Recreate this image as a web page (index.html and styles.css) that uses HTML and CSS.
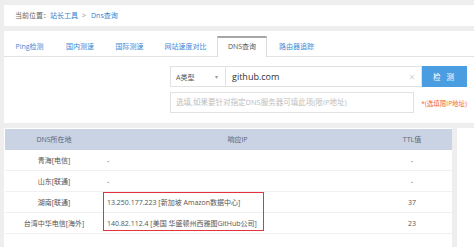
FILE: index.html
```html
<!DOCTYPE html>
<html lang="zh-CN">
<head>
    <meta charset="UTF-8">
    <meta name="viewport" content="width=device-width, initial-scale=1.0">
    <title>Dns查询 - 站长工具</title>
    <link rel="stylesheet" href="styles.css">
</head>
<body>
    <div class="crumb">
        当前位置：<a href="#">站长工具</a><span class="sep">&gt;</span><a href="#">Dns查询</a>
    </div>

    <div class="panel tool">
        <ul class="tabs">
            <li class="t-ping">Ping检测</li>
            <li class="t-cn">国内测速</li>
            <li class="t-intl">国际测速</li>
            <li class="t-cmp">网站速度对比</li>
            <li class="t-dns active">DNS查询</li>
            <li class="t-route">路由器追踪</li>
        </ul>

        <form class="query">
            <div class="query-row">
                <div class="select">A类型<span class="caret">&#9662;</span></div>
                <div class="host">
                    <span>github.com</span>
                    <span class="clear">&times;</span>
                </div>
                <button type="button" class="check">检 测</button>
            </div>
            <div class="query-row">
                <div class="server">选填,如果要针对指定DNS服务器可填此项(限IP地址)</div>
                <span class="note">*(选填限IP地址)</span>
            </div>
        </form>
    </div>

    <div class="bottom">
        <div class="panel result">
            <div class="trow thead">
                <div class="c-loc">DNS所在地</div>
                <div class="c-ip center">响应IP</div>
                <div class="c-ttl">TTL值</div>
            </div>
            <div class="trow">
                <div class="c-loc">青海[电信]</div>
                <div class="c-ip">-</div>
                <div class="c-ttl">-</div>
            </div>
            <div class="trow">
                <div class="c-loc">山东[联通]</div>
                <div class="c-ip">-</div>
                <div class="c-ttl">-</div>
            </div>
            <div class="trow">
                <div class="c-loc">湖南[联通]</div>
                <div class="c-ip">13.250.177.223 [新加坡 Amazon数据中心]</div>
                <div class="c-ttl">37</div>
            </div>
            <div class="trow">
                <div class="c-loc">台湾中华电信[海外]</div>
                <div class="c-ip">140.82.112.4 [美国 华盛顿州西雅图GitHub公司]</div>
                <div class="c-ttl">23</div>
            </div>

            <!-- 标注框 -->
            <div class="highlight"></div>
        </div>
        <div class="panel side"></div>
    </div>
</body>
</html>
```

FILE: styles.css
```css
* {
    margin: 0;
    padding: 0;
    box-sizing: border-box;
}

body {
    font-family: "Open Sans", "Noto Sans CJK SC", sans-serif;
    font-size: 7px;
    color: #555;
    background: #eeeeee;
    width: 474px;
    height: 247px;
    overflow: hidden;
}

a {
    color: #2f7fcf;
    text-decoration: none;
}

.panel {
    background: #fff;
}

/* 面包屑 */
.crumb {
    margin: 5px 0 0 4px;
    height: 21px;
    line-height: 21px;
    padding-left: 11px;
    background: #fff;
    color: #666;
}

.crumb .sep {
    margin: 0 5px 0 4px;
    color: #888;
}

/* 工具面板 */
.tool {
    margin: 5px 0 0 4px;
}

.tabs {
    display: flex;
    list-style: none;
    padding-top: 5px;
    border-bottom: 1px solid #e3e3e3;
}

.tabs li {
    height: 20px;
    line-height: 19px;
    text-align: center;
    white-space: nowrap;
    color: #3b8ad6;
    border: 1px solid transparent;
    border-bottom: none;
}

.t-ping { width: 51px; }
.t-cn { width: 50px; }
.t-intl { width: 49px; }
.t-cmp { width: 63px; }
.t-dns { width: 50px; }
.t-route { padding: 0 11px; }

.tabs li.active {
    color: #555;
    background: #fff;
    border-color: #dcdcdc;
    border-top: 2px solid #a6a6a6;
    line-height: 17px;
    margin-bottom: -1px;
    height: 21px;
}

.query {
    padding: 9px 7px 10px 166px;
    display: flex;
    flex-direction: column;
    gap: 5px;
}

.query-row {
    display: flex;
    align-items: center;
    height: 21px;
}

.select {
    width: 56px;
    height: 21px;
    border: 1px solid #e2e2e2;
    padding: 0 5px;
    display: flex;
    align-items: center;
    justify-content: space-between;
    color: #555;
}

.caret {
    color: #999;
    font-size: 6px;
    margin-right: 2px;
}

.host {
    flex: 1;
    height: 21px;
    border: 1px solid #e2e2e2;
    border-left: none;
    padding: 0 6px;
    display: flex;
    align-items: center;
    justify-content: space-between;
    font-size: 9px;
    color: #333;
}

.clear {
    color: #bbb;
    font-size: 10px;
    font-weight: 300;
}

.check {
    width: 45px;
    height: 21px;
    border: none;
    background: #4b9de2;
    color: #fff;
    font-family: inherit;
    font-size: 7.5px;
    letter-spacing: 2px;
}

.server {
    width: 247px;
    height: 21px;
    line-height: 19px;
    border: 1px solid #e2e2e2;
    padding-left: 5px;
    font-size: 7.5px;
    white-space: nowrap;
    color: #bdbdbd;
}

.note {
    margin-left: 7px;
    font-size: 6.5px;
    white-space: nowrap;
    color: #f26a2e;
}

/* 结果表格 */
.bottom {
    display: flex;
    gap: 5px;
    margin: 5px 0 0 4px;
    height: 130px;
}

.result {
    position: relative;
    width: 448px;
    padding: 1px 0 0 1px;
}

.side {
    flex: 1;
}

.trow {
    display: grid;
    grid-template-columns: 98px 269px 1fr;
    height: 21px;
    line-height: 21px;
    border-bottom: 1px solid #f1f1f1;
}

.thead {
    background: #c9d3e3;
    color: #5f6673;
    border-bottom: none;
}

.c-loc,
.c-ttl,
.center {
    text-align: center;
    white-space: nowrap;
}

.c-ip {
    padding-left: 4px;
    white-space: nowrap;
}

.thead .c-ip {
    padding-left: 0;
}

.highlight {
    position: absolute;
    left: 99px;
    top: 64px;
    width: 161px;
    height: 39px;
    border: 1px solid #e2343d;
}
```
